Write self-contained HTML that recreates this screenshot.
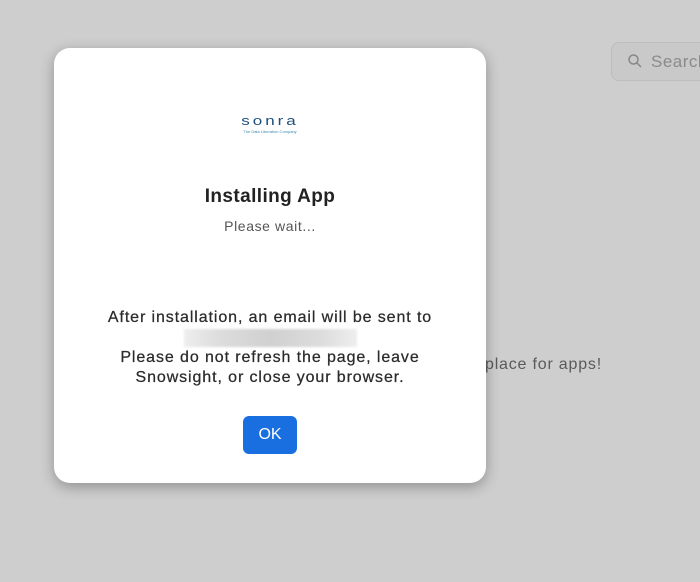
<!DOCTYPE html>
<html><head><style>
body{margin:0;width:700px;height:582px;background:#cecece;font-family:"Liberation Sans",sans-serif;position:relative;overflow:hidden}
.search{position:absolute;left:611px;top:42px;width:120px;height:39px;border:1px solid #bdbdbd;border-radius:8px;background:#c9c9c9;box-sizing:border-box}
.search span{position:absolute;left:39px;top:9px;font-size:17px;color:#8a8a8a;letter-spacing:0.5px}
.bg{position:absolute;left:485px;top:356px;font-size:16px;color:#5a5a5a;letter-spacing:0.8px}
.modal{position:absolute;left:54px;top:48px;width:432px;height:435px;background:#fff;border-radius:16px;box-shadow:0 4px 14px rgba(0,0,0,.3);text-align:center;color:#2b2b2b}
.logo{position:absolute;left:182px;top:66px;width:68px}
h1{position:absolute;top:138px;left:0;right:0;margin:0;font-size:19px;font-weight:bold;color:#222;letter-spacing:0.4px}
.wait{position:absolute;top:170px;left:0;right:0;font-size:14px;color:#555;letter-spacing:0.6px}
.msg{position:absolute;top:260px;left:0;right:0;font-size:16px;line-height:20px;color:#2b2b2b;letter-spacing:0.9px;-webkit-text-stroke:0.25px #2b2b2b}
.blur{display:inline-block;width:173px;height:18px;background:linear-gradient(90deg,#eee,#ddd 20%,#d0d0d0 50%,#ddd 80%,#eee);filter:blur(1px);vertical-align:middle}
.ok{position:absolute;left:189px;top:368px;width:54px;height:38px;background:#1a6fe0;border-radius:6px;color:#fff;font-size:16px;line-height:38px}
</style></head><body>
<div class="search"><svg style="position:absolute;left:15px;top:10px" width="16" height="16" viewBox="0 0 16 16"><circle cx="6.5" cy="6.5" r="4.5" fill="none" stroke="#888" stroke-width="1.5"/><path d="M10 10l4 4" stroke="#888" stroke-width="1.5"/></svg><span>Search</span></div>
<div class="bg">place for apps!</div>
<div class="modal">
<div class="logo"><div style="font-size:17px;color:#1d4f7a;letter-spacing:3px;line-height:14px;transform:scaleY(0.75)">sonra</div><div style="font-size:4px;color:#3a8ab0;margin-top:1px">The Data Liberation Company</div></div>
<h1>Installing App</h1>
<div class="wait">Please wait...</div>
<div class="msg">After installation, an email will be sent to<br><span class="blur"></span><br>Please do not refresh the page, leave<br>Snowsight, or close your browser.</div>
<div class="ok">OK</div>
</div>
</body></html>
